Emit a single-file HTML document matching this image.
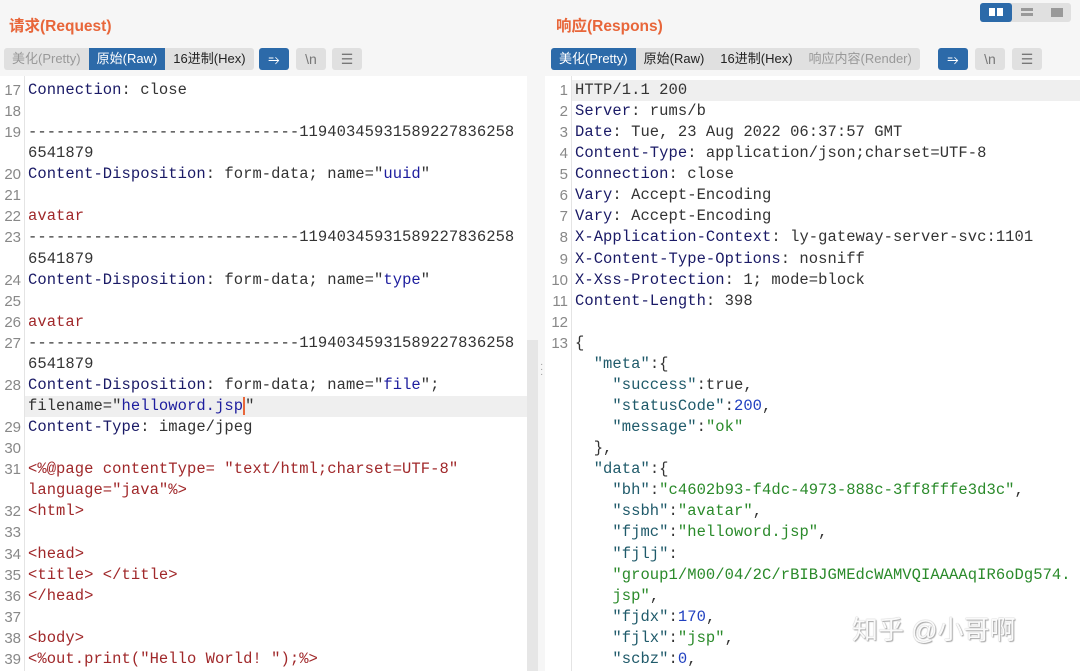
<!DOCTYPE html>
<html><head><meta charset="utf-8"><style>
body{margin:0;width:1080px;height:671px;background:#f6f6f6;position:relative;overflow:hidden;font-family:"Liberation Sans","Noto Sans CJK SC",sans-serif}
.t{position:absolute;color:#e8663a;font-weight:bold;font-size:15.5px;top:14px}
.tabs{position:absolute;top:48px;height:22px;display:flex;font-size:13px;border-radius:3px;overflow:hidden;background:#e0e0e0}
.tabs span{padding:0 8px;line-height:22px;color:#222}
.tabs .g{color:#999}.tabs .a{background:#2c6aa9;color:#fff}
.ib{position:absolute;top:48px;width:30px;height:22px;border-radius:3px;background:#e0e0e0;color:#777;text-align:center;line-height:22px;font-size:14px}
.ib.a{background:#2c6aa9;color:#fff}
.code{position:absolute;top:76px;bottom:0;background:#fff}
.l{position:absolute;height:21px;line-height:21px;font-family:"Liberation Mono",monospace;font-size:15.5px;white-space:pre;color:#333;letter-spacing:0.05px}
.n{position:absolute;width:22px;text-align:right;color:#888;font-family:"Liberation Sans",sans-serif;font-size:15px;height:21px;line-height:21px}
.k{color:#1a1a66}.b{color:#1d1d9e}.r{color:#a0282a}.g2{color:#2a8a2a}.j{color:#1f5a6a}.nm{color:#2040c0}
</style></head><body>
<div class="t" style="left:9px">请求(Request)</div>
<div class="t" style="left:556px">响应(Respons)</div>
<div style="position:absolute;left:980px;top:3px;width:91px;height:19px;background:#e0e0e0;border-radius:3px"></div>
<div style="position:absolute;left:980px;top:3px;width:32px;height:19px;background:#2c6aa9;border-radius:3px"></div>
<div style="position:absolute;left:989px;top:8px;width:6px;height:8px;background:#fff"></div><div style="position:absolute;left:997px;top:8px;width:6px;height:8px;background:#fff"></div>
<div style="position:absolute;left:1021px;top:8px;width:12px;height:3px;background:#999"></div><div style="position:absolute;left:1021px;top:13px;width:12px;height:3px;background:#999"></div>
<div style="position:absolute;left:1051px;top:8px;width:12px;height:9px;background:#999"></div>

<div class="tabs" style="left:4px"><span class="g">美化(Pretty)</span><span class="a">原始(Raw)</span><span>16进制(Hex)</span></div>
<div class="ib a" style="left:259px">⥱</div><div class="ib" style="left:296px">\n</div><div class="ib" style="left:332px">☰</div>
<div class="tabs" style="left:551px"><span class="a">美化(Pretty)</span><span>原始(Raw)</span><span>16进制(Hex)</span><span class="g">响应内容(Render)</span></div>
<div class="ib a" style="left:938px">⥱</div><div class="ib" style="left:975px">\n</div><div class="ib" style="left:1012px">☰</div>

<div class="code" style="left:0;width:527px"></div>
<div style="position:absolute;left:24px;top:76px;width:1px;bottom:0;background:#e4e4e4"></div>
<div style="position:absolute;left:527px;top:340px;width:11px;bottom:0;background:#e6e6e6"></div>
<div style="position:absolute;left:540px;top:362px;color:#999;font-size:10px;line-height:5px">·<br>·<br>·</div>
<div class="code" style="left:545px;right:0"></div>
<div style="position:absolute;left:571px;top:76px;width:1px;bottom:0;background:#e4e4e4"></div>
<div style="position:absolute;left:572px;top:80px;right:0;height:21px;background:#efefef"></div>
<div style="position:absolute;left:25px;top:396px;width:502px;height:21px;background:#efefef"></div>

<div id="L"></div>
<script>
var left=[
[17,'<span class="k">Connection</span>: close'],[18,''],[19,'-----------------------------11940345931589227836258'],[0,'6541879'],
[20,'<span class="k">Content-Disposition</span>: form-data; name="<span class="b">uuid</span>"'],[21,''],[22,'<span class="r">avatar</span>'],
[23,'-----------------------------11940345931589227836258'],[0,'6541879'],
[24,'<span class="k">Content-Disposition</span>: form-data; name="<span class="b">type</span>"'],[25,''],[26,'<span class="r">avatar</span>'],
[27,'-----------------------------11940345931589227836258'],[0,'6541879'],
[28,'<span class="k">Content-Disposition</span>: form-data; name="<span class="b">file</span>";'],
[0,'filename="<span class="b">helloword.jsp</span><span style="border-left:2px solid #e8663a"></span>"'],
[29,'<span class="k">Content-Type</span>: image/jpeg'],[30,''],
[31,'<span class="r">&lt;%@page contentType= "text/html;charset=UTF-8"</span>'],[0,'<span class="r">language="java"%&gt;</span>'],
[32,'<span class="r">&lt;html&gt;</span>'],[33,''],[34,'<span class="r">&lt;head&gt;</span>'],[35,'<span class="r">&lt;title&gt; &lt;/title&gt;</span>'],
[36,'<span class="r">&lt;/head&gt;</span>'],[37,''],[38,'<span class="r">&lt;body&gt;</span>'],[39,'<span class="r">&lt;%out.print("Hello World! ");%&gt;</span>']];
var right=[
[1,'HTTP/1.1 200'],[2,'<span class="k">Server</span>: rums/b'],[3,'<span class="k">Date</span>: Tue, 23 Aug 2022 06:37:57 GMT'],
[4,'<span class="k">Content-Type</span>: application/json;charset=UTF-8'],[5,'<span class="k">Connection</span>: close'],
[6,'<span class="k">Vary</span>: Accept-Encoding'],[7,'<span class="k">Vary</span>: Accept-Encoding'],
[8,'<span class="k">X-Application-Context</span>: ly-gateway-server-svc:1101'],[9,'<span class="k">X-Content-Type-Options</span>: nosniff'],
[10,'<span class="k">X-Xss-Protection</span>: 1; mode=block'],[11,'<span class="k">Content-Length</span>: 398'],[12,''],
[13,'{'],[0,'  <span class="j">"meta"</span>:{'],[0,'    <span class="j">"success"</span>:true,'],[0,'    <span class="j">"statusCode"</span>:<span class="nm">200</span>,'],
[0,'    <span class="j">"message"</span>:<span class="g2">"ok"</span>'],[0,'  },'],[0,'  <span class="j">"data"</span>:{'],
[0,'    <span class="j">"bh"</span>:<span class="g2">"c4602b93-f4dc-4973-888c-3ff8fffe3d3c"</span>,'],
[0,'    <span class="j">"ssbh"</span>:<span class="g2">"avatar"</span>,'],[0,'    <span class="j">"fjmc"</span>:<span class="g2">"helloword.jsp"</span>,'],
[0,'    <span class="j">"fjlj"</span>:'],[0,'    <span class="g2">"group1/M00/04/2C/rBIBJGMEdcWAMVQIAAAAqIR6oDg574.</span>'],
[0,'    <span class="g2">jsp"</span>,'],[0,'    <span class="j">"fjdx"</span>:<span class="nm">170</span>,'],[0,'    <span class="j">"fjlx"</span>:<span class="g2">"jsp"</span>,'],
[0,'    <span class="j">"scbz"</span>:<span class="nm">0</span>,']];
var h='';
function put(arr,nx,tx){arr.forEach(function(a,i){var y=80+i*21.07;
if(a[0])h+='<div class="n" style="left:'+nx+'px;top:'+y+'px">'+a[0]+'</div>';
h+='<div class="l" style="left:'+tx+'px;top:'+y+'px">'+a[1]+'</div>';});}
put(left,-1,28);put(right,546,575);
document.getElementById('L').innerHTML=h;
</script>
<div style="position:absolute;left:852px;top:610px;font-size:26px;color:#fafafa;text-shadow:0 0 1px #999,1px 1px 1px #aaa;font-family:'Liberation Sans','Noto Sans CJK SC',sans-serif">知乎 @小哥啊</div>
</body></html>
